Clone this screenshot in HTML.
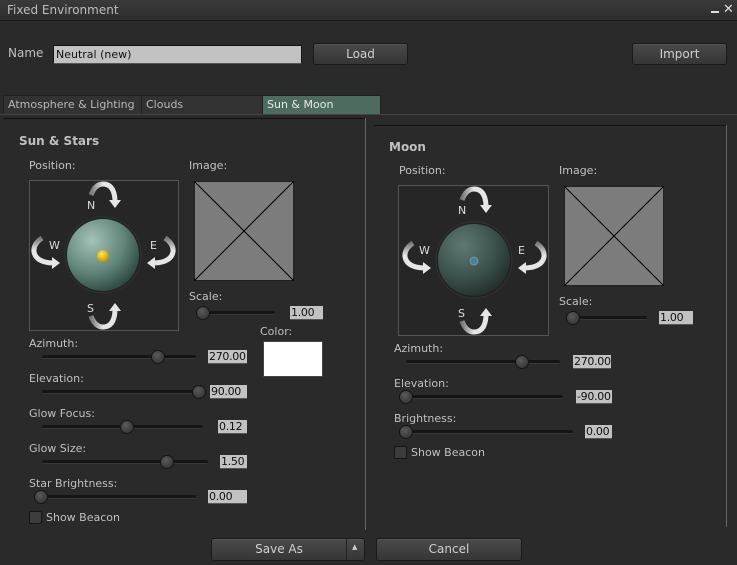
<!DOCTYPE html>
<html><head><meta charset="utf-8"><style>
*{margin:0;padding:0;box-sizing:border-box}
body{width:737px;height:565px;background:#2a2a2a;font-family:"DejaVu Sans","Liberation Sans",sans-serif;font-size:11px;color:#c8c8c8;position:relative;overflow:hidden}
.a{position:absolute}
.title{left:0;top:0;width:737px;height:21px;background:linear-gradient(#3a3a3a,#2d2d2d);border-bottom:1px solid #1c1c1c;color:#bdbdbd;font-size:12px;padding:3px 0 0 7px}
.btn{position:absolute;background:linear-gradient(#4a4a4a,#363636);border:1px solid #1a1a1a;border-radius:3px;color:#d0d0d0;font-size:12px;text-align:center;line-height:20px;box-shadow:inset 0 1px 0 #555}
.inp{position:absolute;background:#c2c2c2;border:1px solid #151515;border-bottom-color:#555;color:#111;font-size:11px;line-height:13px;padding-left:1px}
.val{position:absolute;background:#c2c2c2;color:#111;font-size:11px;line-height:14px;height:14px;padding-left:1px;border-bottom:1px solid #555;letter-spacing:-0.3px;overflow:hidden}
.tab{position:absolute;top:95px;height:20px;background:#323232;border:1px solid #222;color:#b8b8b8;font-size:11px;padding:2px 0 0 4px}
.track{position:absolute;height:4px;background:#151515;border-radius:2px;border-bottom:1px solid #383838}
.knob{position:absolute;width:14px;height:14px;border-radius:50%;background:radial-gradient(circle at 40% 35%,#5a5a5a,#2c2c2c);border:1px solid #151515}
.lbl{position:absolute;color:#c0c0c0;font-size:11px}
.cb{position:absolute;width:13px;height:13px;background:#3c3c3c;border:1px solid #151515;border-radius:2px}
</style></head><body>
<div class="a title">Fixed Environment</div>
<div class="a" style="left:711px;top:11px;width:8px;height:2px;background:#ddd"></div>
<div class="a" style="left:723px;top:2px;color:#ddd;font-size:13px">✕</div>
<div class="lbl" style="left:8px;top:46px;font-size:12px">Name</div>
<div class="inp" style="left:53px;top:45px;width:249px;height:19px;line-height:17px;padding-left:2px">Neutral (new)</div>
<div class="btn" style="left:313px;top:43px;width:95px;height:22px">Load</div>
<div class="btn" style="left:632px;top:43px;width:95px;height:22px">Import</div>
<div class="tab" style="left:3px;width:139px">Atmosphere &amp; Lighting</div>
<div class="tab" style="left:141px;width:122px">Clouds</div>
<div class="tab" style="left:262px;width:119px;background:#4b6c5f;color:#e8e8e8">Sun &amp; Moon</div>
<div class="a" style="left:0;top:114px;width:737px;height:1px;background:#444"></div>
<div class="a" style="left:3px;top:118px;width:363px;height:1px;background:#111"></div>
<div class="a" style="left:365px;top:118px;width:1px;height:412px;background:#666"></div>
<div class="a" style="left:374px;top:125px;width:353px;height:1px;background:#111"></div>
<div class="a" style="left:726px;top:125px;width:1px;height:402px;background:#666"></div>

<svg width="0" height="0" style="position:absolute">
<defs>
<linearGradient id="fadeH" x1="0" y1="0" x2="1" y2="0"><stop offset="0" stop-color="#777"/><stop offset="0.5" stop-color="#e6e6e6"/><stop offset="1" stop-color="#e6e6e6"/></linearGradient>
<linearGradient id="fadeV" x1="0" y1="0" x2="0" y2="1"><stop offset="0" stop-color="#777"/><stop offset="0.5" stop-color="#e6e6e6"/><stop offset="1" stop-color="#e6e6e6"/></linearGradient>
<g id="arrN"><path d="M62 15 Q66 4 74 4 Q85 4 86 20" fill="none" stroke="url(#fadeH)" stroke-width="5"/><polygon points="80,20 92,20 86,28" fill="#e6e6e6"/></g>
<g id="arrW"><path d="M13 58 Q4 64 5 72 Q7 82 23 83" fill="none" stroke="url(#fadeV)" stroke-width="5"/><polygon points="23,77 23,89 31,83" fill="#e6e6e6"/></g>
</defs></svg>

<div class="lbl" style="left:19px;top:134px;font-weight:bold;font-size:12px">Sun &amp; Stars</div>
<div class="lbl" style="left:29px;top:159px">Position:</div>
<div class="lbl" style="left:189px;top:159px">Image:</div>

<svg class="a" style="left:29px;top:180px" width="150" height="151">
<defs><radialGradient id="g1" cx="0.35" cy="0.3" r="0.75"><stop offset="0" stop-color="#a5c2b8"/><stop offset="0.6" stop-color="#5f8478"/><stop offset="1" stop-color="#2d4740"/></radialGradient>
<radialGradient id="y" cx="0.4" cy="0.35" r="0.6"><stop offset="0" stop-color="#ffec60"/><stop offset="1" stop-color="#c89a00"/></radialGradient></defs>
<rect x="0.5" y="0.5" width="149" height="150" fill="#262626" stroke="#555"/>
<circle cx="74" cy="75" r="38" fill="#222" stroke="#333"/>
<circle cx="74" cy="75" r="36" fill="url(#g1)"/>
<circle cx="74" cy="76" r="6" fill="url(#y)"/>
<use href="#arrN"/>
<use href="#arrN" transform="translate(0,151) scale(1,-1)"/>
<use href="#arrW"/>
<use href="#arrW" transform="translate(149,0) scale(-1,1)"/>
<text x="58" y="29" fill="#ddd" font-size="11" font-family="DejaVu Sans">N</text>
<text x="58" y="132" fill="#ddd" font-size="11" font-family="DejaVu Sans">S</text>
<text x="20" y="69" fill="#ddd" font-size="11" font-family="DejaVu Sans">W</text>
<text x="121" y="69" fill="#ddd" font-size="11" font-family="DejaVu Sans">E</text>
</svg>
<svg class="a" style="left:194px;top:181px" width="100" height="100"><rect x="0.5" y="0.5" width="99" height="99" fill="#7c7c7c" stroke="#222"/><path d="M0 0L100 100M100 0L0 100" stroke="#000" stroke-width="1"/></svg>
<div class="lbl" style="left:189px;top:290px">Scale:</div>
<div class="track" style="left:203px;top:311px;width:72px"></div><div class="knob" style="left:196px;top:306px"></div>
<div class="val" style="left:290px;top:306px;width:33px">1.00</div>
<div class="lbl" style="left:260px;top:325px">Color:</div>
<div class="a" style="left:263px;top:341px;width:60px;height:36px;background:#fff;border:1px solid #444"></div>

<div class="lbl" style="left:29px;top:337px">Azimuth:</div>
<div class="track" style="left:42px;top:355px;width:154px"></div><div class="knob" style="left:151px;top:350px"></div>
<div class="val" style="left:208px;top:350px;width:39px">270.00</div>
<div class="lbl" style="left:29px;top:372px">Elevation:</div>
<div class="track" style="left:42px;top:390px;width:158px"></div><div class="knob" style="left:192px;top:385px"></div>
<div class="val" style="left:210px;top:385px;width:37px">90.00</div>
<div class="lbl" style="left:29px;top:407px">Glow Focus:</div>
<div class="track" style="left:42px;top:425px;width:161px"></div><div class="knob" style="left:120px;top:420px"></div>
<div class="val" style="left:218px;top:420px;width:29px">0.12</div>
<div class="lbl" style="left:29px;top:442px">Glow Size:</div>
<div class="track" style="left:42px;top:460px;width:166px"></div><div class="knob" style="left:160px;top:455px"></div>
<div class="val" style="left:220px;top:455px;width:27px">1.50</div>
<div class="lbl" style="left:29px;top:477px">Star Brightness:</div>
<div class="track" style="left:42px;top:495px;width:154px"></div><div class="knob" style="left:34px;top:490px"></div>
<div class="val" style="left:208px;top:490px;width:39px">0.00</div>
<div class="cb" style="left:29px;top:511px"></div><div class="lbl" style="left:46px;top:511px">Show Beacon</div>

<div class="lbl" style="left:389px;top:140px;font-weight:bold;font-size:12px">Moon</div>
<div class="lbl" style="left:399px;top:164px">Position:</div>
<div class="lbl" style="left:559px;top:164px">Image:</div>
<svg class="a" style="left:398px;top:185px" width="151" height="151">
<defs><radialGradient id="g2" cx="0.35" cy="0.3" r="0.75"><stop offset="0" stop-color="#5e7a72"/><stop offset="0.6" stop-color="#3b514b"/><stop offset="1" stop-color="#222f2c"/></radialGradient></defs>
<rect x="0.5" y="0.5" width="150" height="150" fill="#262626" stroke="#555"/>
<circle cx="76" cy="75" r="38" fill="#222" stroke="#333"/>
<circle cx="76" cy="75" r="36" fill="url(#g2)"/>
<circle cx="76" cy="76" r="4" fill="#4d7f96" stroke="#6aa0b8" stroke-width="0.8"/>
<use href="#arrN" transform="translate(2,0)"/>
<use href="#arrN" transform="translate(2,151) scale(1,-1)"/>
<use href="#arrW" transform="translate(2,0)"/>
<use href="#arrW" transform="translate(151,0) scale(-1,1)"/>
<text x="60" y="29" fill="#ddd" font-size="11" font-family="DejaVu Sans">N</text>
<text x="60" y="132" fill="#ddd" font-size="11" font-family="DejaVu Sans">S</text>
<text x="21" y="69" fill="#ddd" font-size="11" font-family="DejaVu Sans">W</text>
<text x="120" y="69" fill="#ddd" font-size="11" font-family="DejaVu Sans">E</text>
</svg>
<svg class="a" style="left:564px;top:186px" width="100" height="100"><rect x="0.5" y="0.5" width="99" height="99" fill="#7c7c7c" stroke="#222"/><path d="M0 0L100 100M100 0L0 100" stroke="#000" stroke-width="1"/></svg>
<div class="lbl" style="left:559px;top:295px">Scale:</div>
<div class="track" style="left:573px;top:316px;width:74px"></div><div class="knob" style="left:566px;top:311px"></div>
<div class="val" style="left:659px;top:311px;width:34px">1.00</div>

<div class="lbl" style="left:394px;top:342px">Azimuth:</div>
<div class="track" style="left:406px;top:360px;width:154px"></div><div class="knob" style="left:515px;top:355px"></div>
<div class="val" style="left:573px;top:355px;width:38px">270.00</div>
<div class="lbl" style="left:394px;top:377px">Elevation:</div>
<div class="track" style="left:406px;top:395px;width:157px"></div><div class="knob" style="left:399px;top:390px"></div>
<div class="val" style="left:576px;top:390px;width:36px">-90.00</div>
<div class="lbl" style="left:394px;top:412px">Brightness:</div>
<div class="track" style="left:406px;top:430px;width:167px"></div><div class="knob" style="left:399px;top:425px"></div>
<div class="val" style="left:585px;top:425px;width:27px">0.00</div>
<div class="cb" style="left:394px;top:446px"></div><div class="lbl" style="left:411px;top:446px">Show Beacon</div>

<div class="btn" style="left:211px;top:538px;width:154px;height:23px;padding-right:18px">Save As</div>
<div class="a" style="left:346px;top:539px;width:1px;height:21px;background:#222"></div>
<div class="a" style="left:352px;top:543px;color:#ccc;font-size:7px">▲</div>
<div class="btn" style="left:376px;top:538px;width:146px;height:23px">Cancel</div>
</body></html>
